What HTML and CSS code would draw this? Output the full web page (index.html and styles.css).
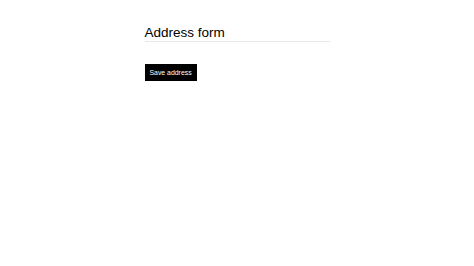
FILE: index.html
```html
<!DOCTYPE html>
<html>
	<head>
		<meta charset="UTF-8">
		<link rel="stylesheet" href="styles.css">
		<title>Address form</title>
	</head>
	<body>
		<div class="container">
			<h1 class="title">Address form</h1>
			<form class="address-form">
				<button type="button" class="savebutton">Save address</button>
			</form>
		</div>
	</body>
</html>
```

FILE: styles.css
```css
* {
	font-family: "Liberation Sans", Arial, sans-serif;
	box-sizing: border-box
}

body {
	background: white;
	margin: 0;
}

.container {
	width: 185px;
	margin: 0 auto;
	padding-top: 25px
}

.title {
	margin: 0;
	font-size: 13.5px;
	line-height: 15px;
	padding-bottom: 1px;
	font-weight: normal;
	color: #000;
	border-bottom: 1px solid #e8e8e8
}

.address-form {
	margin: 22px 0 0 0;
	display: flex
}

.savebutton {
	background: #000;
	color: white;
	border: 0;
	border-radius: 0;
	font-size: 6.9px;
	line-height: 8px;
	padding: 4.5px 5px;
	margin: 0
}
```
